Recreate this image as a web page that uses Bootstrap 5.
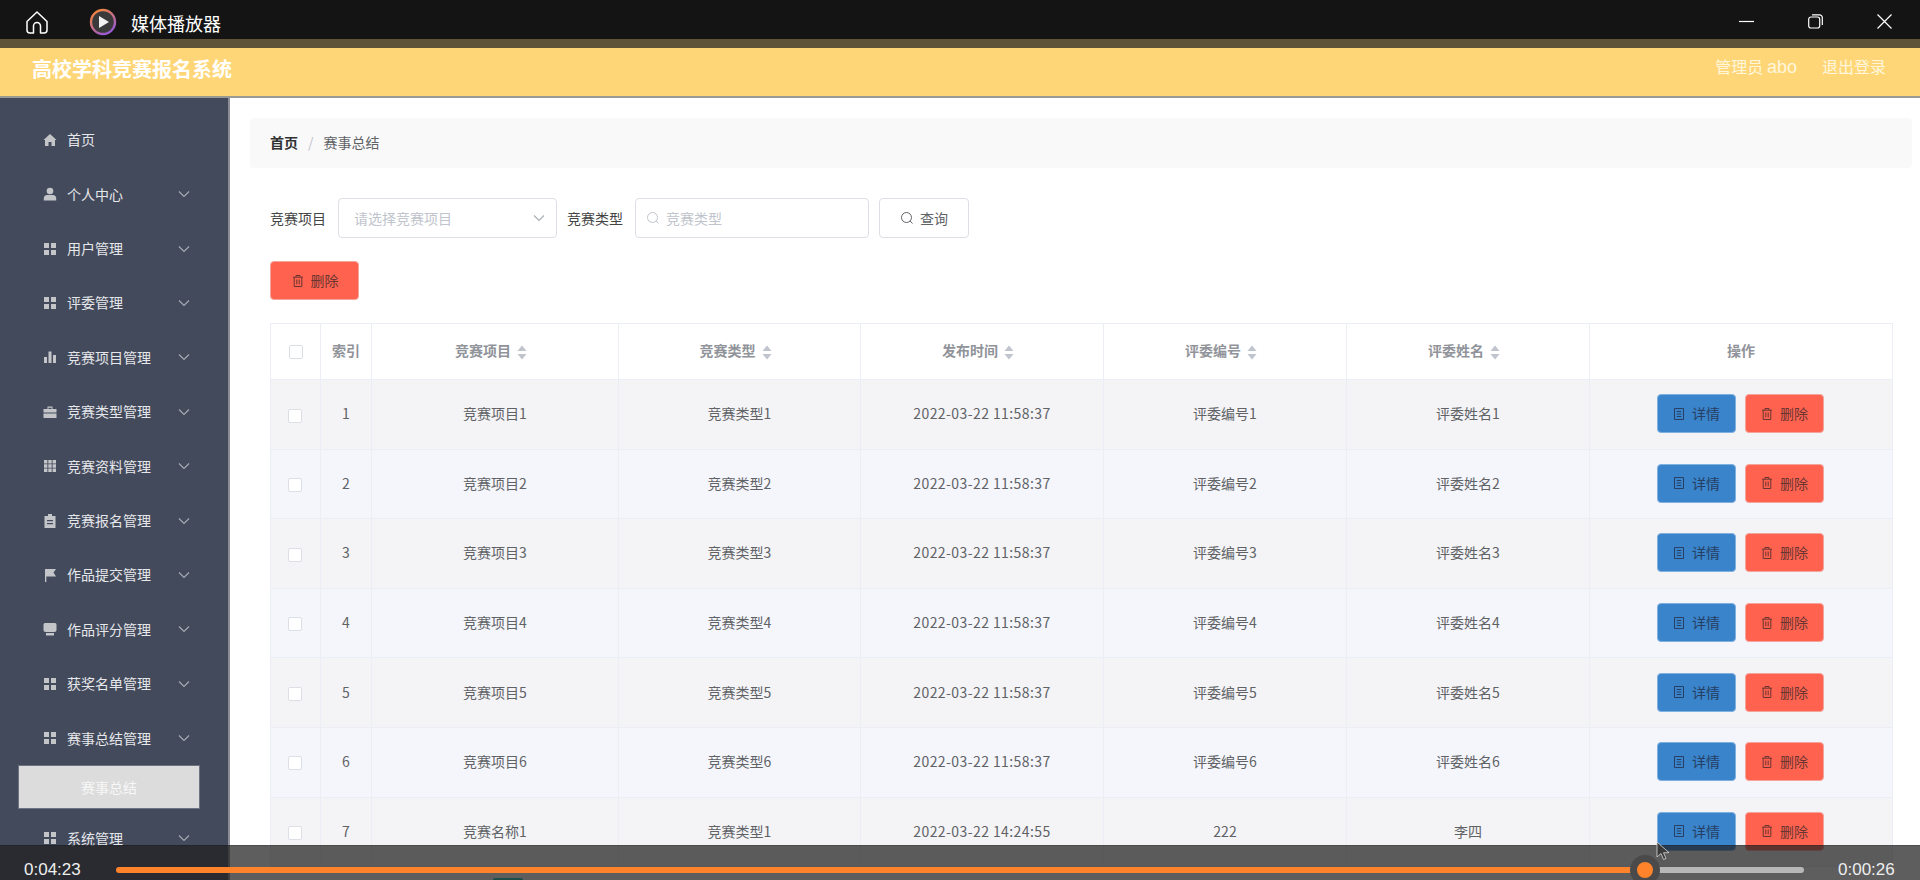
<!DOCTYPE html>
<html lang="zh">
<head>
<meta charset="utf-8">
<title>高校学科竞赛报名系统</title>
<link href="https://cdn.jsdelivr.net/npm/bootstrap@5.3.0/dist/css/bootstrap.min.css" rel="stylesheet">
<style>
html,body{height:880px;overflow:hidden;margin:0}
body{position:relative;font-family:"Noto Sans CJK SC","Liberation Sans",sans-serif;font-size:14px;color:#606266;background:#fff}
.wintitle{height:39px;background:#141414;color:#fff;font-size:18px;padding:4px 0 0 25px}
.wintitle .ttl{margin-left:14px;padding-top:3px}
.wintitle .playmark{margin-left:40px}
.wincontrols{margin-left:auto;padding-right:28px;gap:54px}
.tintstrip{height:9px;background:#5f5438}
.apphead{height:50px;background:#ffd677;border-bottom:2px solid #9a9a94;color:#fff6dc;font-size:16px;padding:0 34px 9px 32px}
.apphead .brand{font-size:20px;font-weight:700;color:#fff;margin-top:2px}
.apphead .who{margin-right:25px}
.apphead .latin{font-family:"Liberation Sans",sans-serif;font-size:18px}
.shell{height:782px}
.sidenav{width:230px;flex:none;background:#434a5c;border-right:2px solid #8b8e96;padding-top:14.6px;overflow:hidden}
.navrow{height:54.4px;padding:0 38px 0 43px;color:#e6e7ea;gap:10px}
.navrow svg.ic{width:14px;height:14px;fill:#c4c5c9;flex:none}
.navrow .chev{margin-left:auto}
.subrow{height:44px;margin:0 28px 2px 18px;background:#dcdcdc;color:#f7f7f7;border:1px solid #6d7382}
.maincol{flex:1;min-width:0;padding:20px 8px 0 20px}
.crumbs{height:50px;background:#f9f9f9;border-radius:4px;padding:0 20px 2px;gap:10px}
.crumbs b{color:#303133;font-weight:700}
.crumbs i{font-style:normal;color:#c0c4cc}
.filters{margin:30px 0 0 20px;height:40px}
.flabel{color:#444;margin-right:12px}
.fbox{height:40px;border:1px solid #dcdfe6;border-radius:4px;color:#c0c4cc;background:#fff}
.fsel{width:219px;padding:0 11px 0 15px;margin-right:10px}
.finp{width:234px;padding:0 10px;gap:6px;margin-right:10px}
.fbtn{width:90px;color:#606266;gap:6px}
.dangerbtn{background:#ff6350;color:#6a3530;border:1px solid #f4a59b;border-radius:4px;gap:6px}
.infobtn{background:#3a84cc;color:#263f62;border:1px solid #7fb0e0;border-radius:4px;gap:6px}
.bulk{width:89px;height:39px;margin:23px 0 23px 20px}
.listtable{width:1622px;margin:0 0 0 20px;table-layout:fixed;border-collapse:collapse;color:#606266}
.listtable>*>tr>*{border:1px solid #ebeef5;padding:0 0 2px;text-align:center;vertical-align:middle;box-shadow:none;background:none;font-weight:400;color:#606266}
.listtable thead th{height:56px;color:#909399;font-weight:700}
.listtable tbody td{height:69.6px;padding-bottom:1px}
.listtable tbody tr:nth-child(odd) td{background:#f4f4f6}
.listtable tbody tr:nth-child(even) td{background:#f5f6fb}
.listtable tbody td.stamp{letter-spacing:.42px}
.tick{display:inline-block;width:14px;height:14px;border:1px solid #dcdfe6;border-radius:2px;background:#fff;vertical-align:middle}
.listtable tbody .tick{margin-right:2px}
.sorter{display:inline-block;vertical-align:middle;margin:0 8px 0 6px}
.actbtn{width:79px;height:39px;display:inline-flex;align-items:center;justify-content:center}
.actions{gap:9px;padding-right:2px}
.playerbar{position:absolute;left:0;right:0;bottom:0;height:35px;background:rgba(32,32,32,.72);border-top:1px solid rgba(0,0,0,.16);color:#eee;font-size:17px}
.time{position:absolute;top:13px;line-height:22px;font-family:"Liberation Sans",sans-serif}
.tstart{left:24px}
.tend{left:1838px}
.rail{position:absolute;height:6px;top:21px;border-radius:3px}
.railgrey{left:1645px;width:159px;background:#b8b8b8}
.railorange{left:116px;width:1530px;background:#ff832b}
.knob{position:absolute;left:1630px;top:9px;width:30px;height:30px;border-radius:50%;background:#ff832b;border:7px solid #4a4a4a}
.pointer{position:absolute;left:1656px;top:-5px}
.pagerpeek{position:absolute;left:493px;bottom:0;width:30px;height:2px;background:#1d4f48;border-radius:2px 2px 0 0}
</style>
</head>
<body>
<svg width="0" height="0" class="d-none">
<symbol id="i-grid" viewBox="0 0 14 14"><rect x="1" y="1" width="5" height="5"/><rect x="8" y="1" width="5" height="5"/><rect x="1" y="8" width="5" height="5"/><rect x="8" y="8" width="5" height="5"/></symbol>
<symbol id="i-trash" viewBox="0 0 14 14"><path d="M2 3.200h10M5 3V1.500h4V3M3.200 3.200v9.300h7.600V3.200M5.800 5.500v4.800M8.200 5.500v4.800" fill="none" stroke="currentColor"/></symbol>
<symbol id="i-doc" viewBox="0 0 14 14"><path d="M2.500 1.500h9v11h-9zM4.800 4.500h4.400M4.800 7h4.400M4.800 9.500h4.400" fill="none" stroke="currentColor"/></symbol>
<symbol id="i-lens" viewBox="0 0 14 14"><circle cx="6.500" cy="6.500" r="5" fill="none" stroke="currentColor"/><path d="M10 10l2.500 2.500" stroke="currentColor"/></symbol>
<symbol id="i-chev" viewBox="0 0 12 8"><path d="M1 1.500l5 5 5-5" fill="none" stroke="#a9acb5" stroke-width="1.100"/></symbol>
<symbol id="i-sort" viewBox="0 0 10 15"><path d="M5 0.500L9.500 6H.5z" fill="#c0c4cc"/><path d="M5 14.500L.5 9h9z" fill="#c0c4cc"/></symbol>
</svg>

<div class="wintitle d-flex align-items-center">
  <svg width="24" height="24" viewBox="0 0 24 24" fill="none" stroke="#fff" stroke-width="1.500"><path d="M2 11.500L12 2l10 9.500V20a3 3 0 0 1-3 3h-3.500v-7a3.500 3.500 0 0 0-7 0v7H5a3 3 0 0 1-3-3z" stroke-linejoin="round"/></svg>
  <svg class="playmark" width="28" height="28" viewBox="0 0 28 28"><defs><linearGradient id="pg" x1="0" y1="0" x2="0.600" y2="1"><stop offset="0" stop-color="#ff8a2b"/><stop offset="1" stop-color="#9a5ad0"/></linearGradient></defs><circle cx="14" cy="14" r="12" fill="#3a3a3a" stroke="url(#pg)" stroke-width="2.400"/><path d="M10 8l10 6-10 6z" fill="#f2f2f2"/></svg>
  <span class="ttl">媒体播放器</span>
  <div class="wincontrols d-flex align-items-center">
    <svg width="15" height="15" viewBox="0 0 15 15"><path d="M0 7.500h15" stroke="#fff" stroke-width="1.200"/></svg>
    <svg width="15" height="15" viewBox="0 0 15 15" fill="none" stroke="#fff" stroke-width="1.200"><rect x=".7" y="3" width="11" height="11" rx="2.200"/><path d="M4 .8h7.500a2.800 2.800 0 0 1 2.800 2.800V11"/></svg>
    <svg width="15" height="15" viewBox="0 0 15 15"><path d="M.5.5l14 14M14.500.5l-14 14" stroke="#fff" stroke-width="1.200"/></svg>
  </div>
</div>
<div class="tintstrip"></div>
<header class="apphead d-flex align-items-center justify-content-between">
  <span class="brand">高校学科竞赛报名系统</span>
  <span><span class="who">管理员 <span class="latin">abo</span></span><span>退出登录</span></span>
</header>

<div class="shell d-flex">
  <nav class="sidenav">
    <div class="navrow d-flex align-items-center"><svg class="ic" viewBox="0 0 14 14"><path d="M7 1L.5 7H2v6h3.500V9h3v4H12V7h1.500z"/></svg>首页</div>
    <div class="navrow d-flex align-items-center"><svg class="ic" viewBox="0 0 14 14"><circle cx="7" cy="4" r="3.300"/><path d="M.8 13.500V11c0-2 2-3 3-3h6.400c1 0 3 1 3 3v2.500z"/></svg>个人中心<svg class="chev" width="12" height="8"><use href="#i-chev"/></svg></div>
    <div class="navrow d-flex align-items-center"><svg class="ic"><use href="#i-grid"/></svg>用户管理<svg class="chev" width="12" height="8"><use href="#i-chev"/></svg></div>
    <div class="navrow d-flex align-items-center"><svg class="ic"><use href="#i-grid"/></svg>评委管理<svg class="chev" width="12" height="8"><use href="#i-chev"/></svg></div>
    <div class="navrow d-flex align-items-center"><svg class="ic" viewBox="0 0 14 14"><rect x="1" y="7" width="3" height="6"/><rect x="5.500" y="1.500" width="3" height="11.500"/><rect x="10" y="5" width="3" height="8"/></svg>竞赛项目管理<svg class="chev" width="12" height="8"><use href="#i-chev"/></svg></div>
    <div class="navrow d-flex align-items-center"><svg class="ic" viewBox="0 0 14 14"><path d="M4.500 4V1.500h5V4H8.500V2.700h-3V4zM.5 4h13v3.500H.5zM.5 8.500h13V13H.5z"/></svg>竞赛类型管理<svg class="chev" width="12" height="8"><use href="#i-chev"/></svg></div>
    <div class="navrow d-flex align-items-center"><svg class="ic" viewBox="0 0 14 14"><path d="M1 1h3.400v3.400H1zM5.300 1h3.400v3.400H5.300zM9.600 1H13v3.400H9.600zM1 5.300h3.400v3.400H1zM5.300 5.300h3.400v3.400H5.300zM9.600 5.300H13v3.400H9.600zM1 9.600h3.400V13H1zM5.300 9.600h3.400V13H5.300zM9.600 9.600H13V13H9.600z"/></svg>竞赛资料管理<svg class="chev" width="12" height="8"><use href="#i-chev"/></svg></div>
    <div class="navrow d-flex align-items-center"><svg class="ic" viewBox="0 0 14 14"><path fill-rule="evenodd" d="M5 0h4v2h3.500v12h-11V2H5zM4 6v1.200h6V6zM4 9v1.200h6V9z"/></svg>竞赛报名管理<svg class="chev" width="12" height="8"><use href="#i-chev"/></svg></div>
    <div class="navrow d-flex align-items-center"><svg class="ic" viewBox="0 0 14 14"><path d="M2 1h11l-2.500 3.500L13 8.500H3.300V14H2z"/></svg>作品提交管理<svg class="chev" width="12" height="8"><use href="#i-chev"/></svg></div>
    <div class="navrow d-flex align-items-center"><svg class="ic" viewBox="0 0 14 14"><path d="M2 1h10a1.500 1.500 0 0 1 1.500 1.500V8a2 2 0 0 1-2 2h-9a2 2 0 0 1-2-2V2.500A1.500 1.500 0 0 1 2 1zM3 11h8v2.500H3z"/></svg>作品评分管理<svg class="chev" width="12" height="8"><use href="#i-chev"/></svg></div>
    <div class="navrow d-flex align-items-center"><svg class="ic"><use href="#i-grid"/></svg>获奖名单管理<svg class="chev" width="12" height="8"><use href="#i-chev"/></svg></div>
    <div class="navrow d-flex align-items-center"><svg class="ic"><use href="#i-grid"/></svg>赛事总结管理<svg class="chev" width="12" height="8"><use href="#i-chev"/></svg></div>
    <div class="subrow d-flex align-items-center justify-content-center">赛事总结</div>
    <div class="navrow d-flex align-items-center"><svg class="ic"><use href="#i-grid"/></svg>系统管理<svg class="chev" width="12" height="8"><use href="#i-chev"/></svg></div>
  </nav>

  <main class="maincol">
    <div class="crumbs d-flex align-items-center"><b>首页</b><i>/</i><span>赛事总结</span></div>
    <div class="filters d-flex align-items-center">
      <span class="flabel">竞赛项目</span>
      <div class="fbox fsel d-flex align-items-center justify-content-between"><span>请选择竞赛项目</span><svg width="12" height="8"><use href="#i-chev"/></svg></div>
      <span class="flabel">竞赛类型</span>
      <div class="fbox finp d-flex align-items-center"><svg width="14" height="14"><use href="#i-lens"/></svg><span>竞赛类型</span></div>
      <div class="fbox fbtn d-flex align-items-center justify-content-center"><svg width="14" height="14"><use href="#i-lens"/></svg><span>查询</span></div>
    </div>
    <div class="bulk dangerbtn d-flex align-items-center justify-content-center"><svg width="14" height="14"><use href="#i-trash"/></svg>删除</div>
    <table class="table listtable">
      <colgroup><col style="width:50px"><col style="width:51px"><col style="width:247px"><col style="width:242px"><col style="width:243px"><col style="width:243px"><col style="width:243px"><col style="width:303px"></colgroup>
      <thead><tr>
        <th><span class="tick"></span></th><th>索引</th>
        <th>竞赛项目<svg class="sorter" width="10" height="15"><use href="#i-sort"/></svg></th>
        <th>竞赛类型<svg class="sorter" width="10" height="15"><use href="#i-sort"/></svg></th>
        <th>发布时间<svg class="sorter" width="10" height="15"><use href="#i-sort"/></svg></th>
        <th>评委编号<svg class="sorter" width="10" height="15"><use href="#i-sort"/></svg></th>
        <th>评委姓名<svg class="sorter" width="10" height="15"><use href="#i-sort"/></svg></th>
        <th>操作</th>
      </tr></thead>
      <tbody>
        <tr><td><span class="tick"></span></td><td>1</td><td>竞赛项目1</td><td>竞赛类型1</td><td class="stamp">2022-03-22 11:58:37</td><td>评委编号1</td><td>评委姓名1</td><td><div class="actions d-flex justify-content-center"><span class="actbtn infobtn"><svg width="14" height="14"><use href="#i-doc"/></svg>详情</span><span class="actbtn dangerbtn"><svg width="14" height="14"><use href="#i-trash"/></svg>删除</span></div></td></tr>
        <tr><td><span class="tick"></span></td><td>2</td><td>竞赛项目2</td><td>竞赛类型2</td><td class="stamp">2022-03-22 11:58:37</td><td>评委编号2</td><td>评委姓名2</td><td><div class="actions d-flex justify-content-center"><span class="actbtn infobtn"><svg width="14" height="14"><use href="#i-doc"/></svg>详情</span><span class="actbtn dangerbtn"><svg width="14" height="14"><use href="#i-trash"/></svg>删除</span></div></td></tr>
        <tr><td><span class="tick"></span></td><td>3</td><td>竞赛项目3</td><td>竞赛类型3</td><td class="stamp">2022-03-22 11:58:37</td><td>评委编号3</td><td>评委姓名3</td><td><div class="actions d-flex justify-content-center"><span class="actbtn infobtn"><svg width="14" height="14"><use href="#i-doc"/></svg>详情</span><span class="actbtn dangerbtn"><svg width="14" height="14"><use href="#i-trash"/></svg>删除</span></div></td></tr>
        <tr><td><span class="tick"></span></td><td>4</td><td>竞赛项目4</td><td>竞赛类型4</td><td class="stamp">2022-03-22 11:58:37</td><td>评委编号4</td><td>评委姓名4</td><td><div class="actions d-flex justify-content-center"><span class="actbtn infobtn"><svg width="14" height="14"><use href="#i-doc"/></svg>详情</span><span class="actbtn dangerbtn"><svg width="14" height="14"><use href="#i-trash"/></svg>删除</span></div></td></tr>
        <tr><td><span class="tick"></span></td><td>5</td><td>竞赛项目5</td><td>竞赛类型5</td><td class="stamp">2022-03-22 11:58:37</td><td>评委编号5</td><td>评委姓名5</td><td><div class="actions d-flex justify-content-center"><span class="actbtn infobtn"><svg width="14" height="14"><use href="#i-doc"/></svg>详情</span><span class="actbtn dangerbtn"><svg width="14" height="14"><use href="#i-trash"/></svg>删除</span></div></td></tr>
        <tr><td><span class="tick"></span></td><td>6</td><td>竞赛项目6</td><td>竞赛类型6</td><td class="stamp">2022-03-22 11:58:37</td><td>评委编号6</td><td>评委姓名6</td><td><div class="actions d-flex justify-content-center"><span class="actbtn infobtn"><svg width="14" height="14"><use href="#i-doc"/></svg>详情</span><span class="actbtn dangerbtn"><svg width="14" height="14"><use href="#i-trash"/></svg>删除</span></div></td></tr>
        <tr><td><span class="tick"></span></td><td>7</td><td>竞赛名称1</td><td>竞赛类型1</td><td class="stamp">2022-03-22 14:24:55</td><td>222</td><td>李四</td><td><div class="actions d-flex justify-content-center"><span class="actbtn infobtn"><svg width="14" height="14"><use href="#i-doc"/></svg>详情</span><span class="actbtn dangerbtn"><svg width="14" height="14"><use href="#i-trash"/></svg>删除</span></div></td></tr>
      </tbody>
    </table>
  </main>
</div>

<div class="playerbar">
  <span class="pagerpeek"></span>
  <span class="time tstart">0:04:23</span>
  <span class="rail railgrey"></span>
  <span class="rail railorange"></span>
  <span class="knob"></span>
  <span class="time tend">0:00:26</span>
  <svg class="pointer" width="14" height="20" viewBox="0 0 14 20"><path d="M1 1v15l4-3.500 2.500 6 2.500-1-2.500-5.800H13z" fill="#3a3a3a" stroke="#d8d8d8" stroke-width=".8"/></svg>
</div>
<script src="https://cdn.jsdelivr.net/npm/bootstrap@5.3.0/dist/js/bootstrap.bundle.min.js"></script>
</body>
</html>
